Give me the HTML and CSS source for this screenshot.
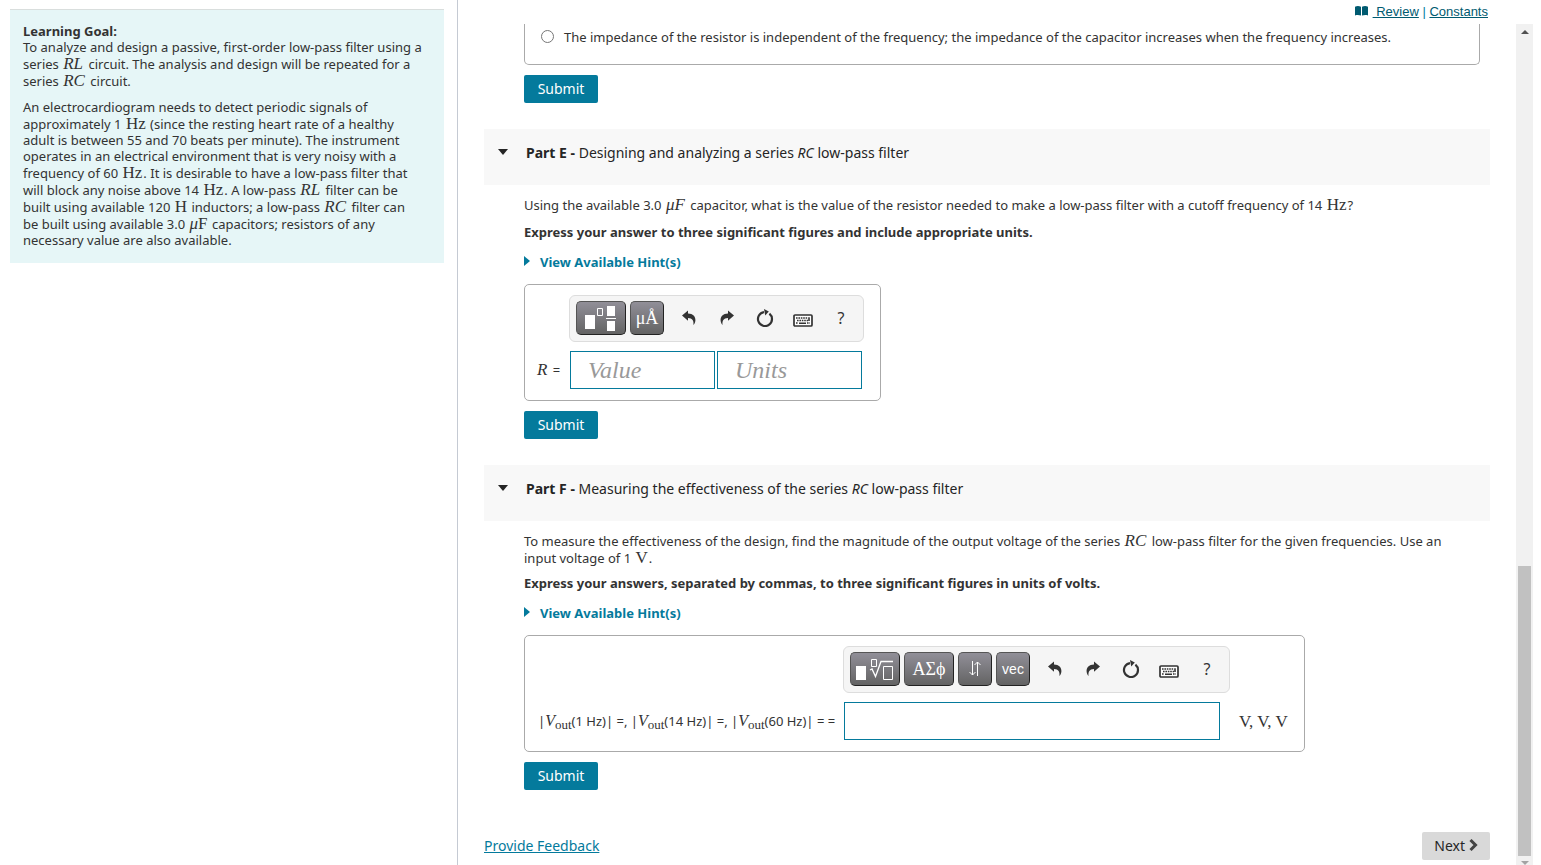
FILE: index.html
```html
<!DOCTYPE html>
<html lang="en">
<head>
  <meta charset="UTF-8" />
  <meta name="viewport" content="width=device-width, initial-scale=1" />
  <title>Low-Pass Filter Design</title>
  <link rel="stylesheet" href="styles.css">
</head>
<body>
  <!-- shared icons -->
  <svg width="0" height="0" class="sprite" aria-hidden="true">
    <symbol id="undo" viewBox="0 0 14 16">
      <path d="M0 5.6 6 0.6V3.6C11 3.8 13.6 6.6 13.4 10.4 13.2 12.6 12.4 14 11.4 15 12 11 10.6 8.2 6 8.1V10.8Z" />
    </symbol>
    <symbol id="redo" viewBox="0 0 14 16">
      <path d="M14 5.6 8 0.6V3.6C3 3.8 0.4 6.6 0.6 10.4 0.8 12.6 1.6 14 2.6 15 2 11 3.4 8.2 8 8.1V10.8Z" />
    </symbol>
    <symbol id="reset" viewBox="0 0 18 18">
      <path d="M13.4 4.6A7 7 0 1 1 8 3.1" fill="none" stroke="#333" stroke-width="2.2" />
      <path d="M8 0 12.8 2.6 9.2 6.4Z" />
    </symbol>
    <symbol id="keyboard" viewBox="0 0 20 13">
      <rect x="1" y="1" width="18" height="11" rx="1" fill="#fff" stroke="#333" stroke-width="1.7" />
      <path d="M3 4H15M4 6.5H15M3 9H5M14 9H17" stroke="#333" stroke-width="1.6" stroke-dasharray="1.6 .8" />
      <path d="M6 9.2H13M16 3.3V7" stroke="#333" stroke-width="1.6" />
    </symbol>
  </svg>

  <aside class="sidebar">
    <section class="goal">
      <p><b>Learning Goal:</b><br>
      To analyze and design a passive, first-order low-pass filter using a<br>
      series <i class="math">RL</i> circuit. The analysis and design will be repeated for a<br>
      series <i class="math">RC</i> circuit.</p>
      <p>An electrocardiogram needs to detect periodic signals of<br>
      approximately 1 <span class="math">Hz</span> (since the resting heart rate of a healthy<br>
      adult is between 55 and 70 beats per minute). The instrument<br>
      operates in an electrical environment that is very noisy with a<br>
      frequency of 60 <span class="math">Hz</span>. It is desirable to have a low-pass filter that<br>
      will block any noise above 14 <span class="math">Hz</span>. A low-pass <i class="math">RL</i> filter can be<br>
      built using available 120 <span class="math">H</span> inductors; a low-pass <i class="math">RC</i> filter can<br>
      be built using available 3.0 <span class="math"><i>μ</i>F</span> capacitors; resistors of any<br>
      necessary value are also available.</p>
    </section>
  </aside>

  <main class="main">
    <nav class="links">
      <svg width="13" height="10" viewBox="0 0 13 10" aria-hidden="true"><path d="M0 .7C2-.1 4-.1 6 .8V9.6C4 8.8 2 8.8 0 9.4ZM7 .8C9-.1 11-.1 13 .7V9.4C11 8.8 9 8.8 7 9.6Z" fill="#005a70" /></svg>
      <a href="#">&nbsp;Review</a> | <a href="#">Constants</a>
    </nav>

    <div class="viewport">
      <div class="content">
        <div class="answer choice">
          <input type="radio" id="choice4" name="partD">
          <label for="choice4">The impedance of the resistor is independent of the frequency; the impedance of the capacitor increases when the frequency increases.</label>
        </div>
        <button class="submit">Submit</button>

        <h2 class="part"><span class="caret"></span><span><b>Part E -</b> Designing and analyzing a series <i>RC</i> low-pass filter</span></h2>
        <div class="problem">
          <p>Using the available 3.0 <i class="math">μF</i> capacitor, what is the value of the resistor needed to make a low-pass filter with a cutoff frequency of 14 <span class="math">Hz</span>?</p>
          <p><b>Express your answer to three significant figures and include appropriate units.</b></p>
          <a class="hint" href="#"><span class="arrow"></span>View Available Hint(s)</a>
        </div>
        <div class="answer entry entry-e">
          <div class="toolbar">
            <button class="key wide" aria-label="Templates">
              <svg width="32" height="26" viewBox="0 0 32 26"><path d="M0 10H10V24H0ZM22 1H30V11H22ZM22 16H30V26H22Z" fill="#fff" /><path d="M12.500 3.500H17.500V10.500H12.500ZM21 13.500H31" fill="none" stroke="#fff" /></svg>
            </button>
            <button class="key serif">μÅ</button>
            <div class="tools">
              <button aria-label="Undo"><svg width="14" height="16"><use href="#undo" /></svg></button>
              <button aria-label="Redo"><svg width="14" height="16"><use href="#redo" /></svg></button>
              <button aria-label="Reset"><svg width="18" height="18"><use href="#reset" /></svg></button>
              <button aria-label="Keyboard"><svg class="kb" width="20" height="13"><use href="#keyboard" /></svg></button>
              <button>?</button>
            </div>
          </div>
          <label class="lhs" for="value"><i class="math">R</i> =</label>
          <div class="fields">
            <input type="text" id="value" placeholder="Value">
            <input type="text" aria-label="Units" placeholder="Units">
          </div>
        </div>
        <button class="submit">Submit</button>

        <h2 class="part"><span class="caret"></span><span><b>Part F -</b> Measuring the effectiveness of the series <i>RC</i> low-pass filter</span></h2>
        <div class="problem tight">
          <p>To measure the effectiveness of the design, find the magnitude of the output voltage of the series <i class="math">RC</i> low-pass filter for the given frequencies. Use an<br>
          input voltage of 1 <span class="math">V</span>.</p>
          <p><b>Express your answers, separated by commas, to three significant figures in units of volts.</b></p>
          <a class="hint" href="#"><span class="arrow"></span>View Available Hint(s)</a>
        </div>
        <div class="answer entry entry-f">
          <div class="toolbar">
            <button class="key wide" aria-label="Math templates">
              <svg width="38" height="24" viewBox="0 0 38 24"><path d="M0 9H10V23H0Z" fill="#fff" /><path d="M15.500 2.500H20.500V9.500H15.500ZM27.500 9.500H36.500V22.500H27.500Z" fill="none" stroke="#fff" /><path d="M14 13 16 12 19.500 19.500 25 4.500H37" fill="none" stroke="#fff" stroke-width="1.3" /></svg>
            </button>
            <button class="key serif wide">ΑΣϕ</button>
            <button class="key" aria-label="Arrows">
              <svg width="14" height="16" viewBox="0 0 14 16"><path d="M4.500 0V14M1.500 11 4.500 14 7.500 11M9.500 15V1M6.500 4 9.500 1 12.500 4" fill="none" stroke="#fff" /></svg>
            </button>
            <button class="key vec">vec</button>
            <div class="tools">
              <button aria-label="Undo"><svg width="14" height="16"><use href="#undo" /></svg></button>
              <button aria-label="Redo"><svg width="14" height="16"><use href="#redo" /></svg></button>
              <button aria-label="Reset"><svg width="18" height="18"><use href="#reset" /></svg></button>
              <button aria-label="Keyboard"><svg class="kb" width="20" height="13"><use href="#keyboard" /></svg></button>
              <button>?</button>
            </div>
          </div>
          <label class="lhs" for="volts">|<span class="math"><i>V</i><sub>out</sub></span>(1 Hz)| =, |<span class="math"><i>V</i><sub>out</sub></span>(14 Hz)| =, |<span class="math"><i>V</i><sub>out</sub></span>(60 Hz)| = =</label>
          <div class="fields">
            <input type="text" id="volts">
          </div>
          <span class="units">V, V, V</span>
        </div>
        <button class="submit">Submit</button>

        <footer class="footer">
          <a href="#">Provide Feedback</a>
          <button class="next">Next <svg width="9" height="12" viewBox="0 0 9 12" aria-hidden="true"><path d="M1.500 1 6.500 6 1.500 11" fill="none" stroke="#444" stroke-width="3" /></svg></button>
        </footer>
      </div>

      <div class="scrollbar">
        <span class="up"></span>
        <span class="thumb"></span>
        <span class="down"></span>
      </div>
    </div>
  </main>
</body>
</html>
```
FILE: styles.css
```css
* {
  box-sizing: border-box;
}

body {
  display: flex;
  height: 100vh;
  margin: 0;
  overflow: hidden;
  font-family: "Noto Sans", "Open Sans", sans-serif;
  font-size: 13px;
  line-height: 17px;
  color: #333;
  background: #fff;
}

p {
  margin: 0 0 10px;
}

button {
  border: 0;
  padding: 0;
  font-family: inherit;
  cursor: pointer;
}

.sprite {
  position: absolute;
}

.math {
  margin: 0 1px;
  font-family: "Liberation Serif", serif;
  font-size: 17px;
  line-height: 16px;
}

i.math {
  margin: 0 2px 0 1px;
}

.math sub {
  font-size: 13px;
  line-height: 0;
  vertical-align: -3px;
}

/* left column */
.sidebar {
  flex: 0 0 458px;
  padding: 9px 13px 0 10px;
  border-right: 1px solid #c5cad3;
}

.goal {
  padding: 13px 0 15px 13px;
  border-top: 1px solid #d9dedd;
  background: #e6f6f7;
  line-height: 16px;
  white-space: nowrap;
}

.goal .math {
  line-height: 17px;
}

.goal p:last-child {
  margin: 0;
}

/* right column */
.main {
  flex: 1;
  min-width: 0;
  display: flex;
  flex-direction: column;
}

.links {
  height: 24px;
  padding: 3px 53px 0 0;
  font-family: "Liberation Sans", Arial, sans-serif;
  text-align: right;
  color: #007fa3;
}

.links a {
  color: #005a70;
}

.links svg {
  margin-right: 1px;
}

.viewport {
  flex: 1;
  min-height: 0;
  display: flex;
  padding-right: 8px;
}

.content {
  flex: 1;
  min-width: 0;
  padding: 0 26px;
}

.answer {
  margin-left: 40px;
  border: 1px solid #aaa;
  border-radius: 5px;
}

.choice {
  display: flex;
  height: 41px;
  margin-right: 10px;
  padding: 5px 0 0 16px;
  border-top: 0;
  border-radius: 0 0 5px 5px;
}

.choice input {
  width: 13px;
  height: 13px;
  margin: 1px 10px 0 0;
}

.submit {
  display: block;
  width: 74px;
  height: 28px;
  margin: 10px 0 26px 40px;
  padding-bottom: 2px;
  border-radius: 2px;
  background: #047a9c;
  color: #fff;
  font-size: 14px;
}

.part {
  display: flex;
  height: 56px;
  margin: 0 0 12px;
  padding: 14px 14px 0;
  background: #f8f8f8;
  color: #252525;
  font-size: 14px;
  font-weight: normal;
  line-height: 20px;
}

.caret {
  width: 0;
  margin: 6px 18px 0 0;
  border: 5px solid transparent;
  border-top: 6px solid #252525;
  border-bottom: 0;
  align-self: flex-start;
}

.problem {
  margin-left: 40px;
}

.tight p {
  margin-bottom: 8px;
}

.hint {
  display: flex;
  align-items: center;
  margin: 13px 0;
  color: #047a9c;
  font-weight: bold;
  text-decoration: none;
}

.arrow {
  margin: 0 10px 3px 0;
  border: 5px solid transparent;
  border-left: 6px solid #047a9c;
  border-right: 0;
}

/* answer entry with its math toolbar */
.entry {
  display: grid;
  width: max-content;
  padding: 10px 0 11px;
  row-gap: 9px;
  align-items: center;
}

.entry-e {
  grid-template-columns: 44px auto;
  padding-right: 16px;
}

.entry-f {
  grid-template-columns: 318px auto auto;
  padding-right: 16px;
}

.toolbar {
  grid-column: 2;
  display: flex;
  gap: 4px;
  height: 47px;
  padding: 5px 5px 0 6px;
  border: 1px solid #ddd;
  border-radius: 6px;
  background: #f5f5f5;
}

.key {
  display: flex;
  align-items: center;
  justify-content: center;
  width: 34px;
  height: 34px;
  border: 1px solid #555;
  border-right-color: #222;
  border-bottom-color: #222;
  border-radius: 5px;
  background: linear-gradient(#918f98, #636363);
  color: #fff;
  font-size: 14px;
}

.wide {
  width: 50px;
}

.serif {
  font-family: "Liberation Serif", serif;
  font-size: 18px;
}

.vec {
  font-family: "Liberation Sans", Arial, sans-serif;
}

.tools {
  display: flex;
  gap: 4px;
  margin-left: 4px;
}

.tools button {
  display: flex;
  align-items: center;
  justify-content: center;
  width: 34px;
  height: 34px;
  background: none;
  color: #333;
  font-size: 16px;
}

.tools svg {
  fill: #333;
}

.tools .kb {
  margin-top: 4px;
}

.lhs {
  grid-column: 1;
  padding-left: 11px;
  white-space: nowrap;
}

.entry-f .lhs {
  padding-left: 13px;
}

.entry-f .lhs .math {
  margin: 0;
  font-size: 16px;
}

.fields {
  display: flex;
  gap: 2px;
  padding-left: 1px;
}

.fields input {
  width: 145px;
  height: 38px;
  padding: 0 17px;
  border: 1px solid #047a9c;
  font-family: "Liberation Serif", serif;
  font-size: 24px;
}

.fields input::placeholder {
  color: #999;
  font-style: italic;
}

.entry-f .fields input {
  width: 376px;
}

.units {
  padding-left: 9px;
  font-family: "Liberation Serif", serif;
  font-size: 17px;
}

.footer {
  display: flex;
  align-items: center;
  justify-content: space-between;
  margin-top: 42px;
  font-size: 14px;
}

.footer a {
  padding-bottom: 2px;
  color: #047a9c;
}

.next {
  width: 68px;
  height: 28px;
  padding-bottom: 1px;
  border-radius: 2px;
  background: #d9d9d9;
  color: #252525;
  font-size: 14px;
}

.scrollbar {
  display: flex;
  flex-direction: column;
  align-items: center;
  width: 17px;
  background: #f1f1f1;
}

.up,
.down {
  border: 4px solid transparent;
}

.up {
  margin-top: 6px;
  border-top: 0;
  border-bottom-color: #505050;
}

.thumb {
  width: 13px;
  height: 290px;
  margin-top: auto;
  background: #c1c1c1;
}

.down {
  margin-top: 5px;
  border-bottom: 0;
  border-top-color: #a3a3a3;
}
```
